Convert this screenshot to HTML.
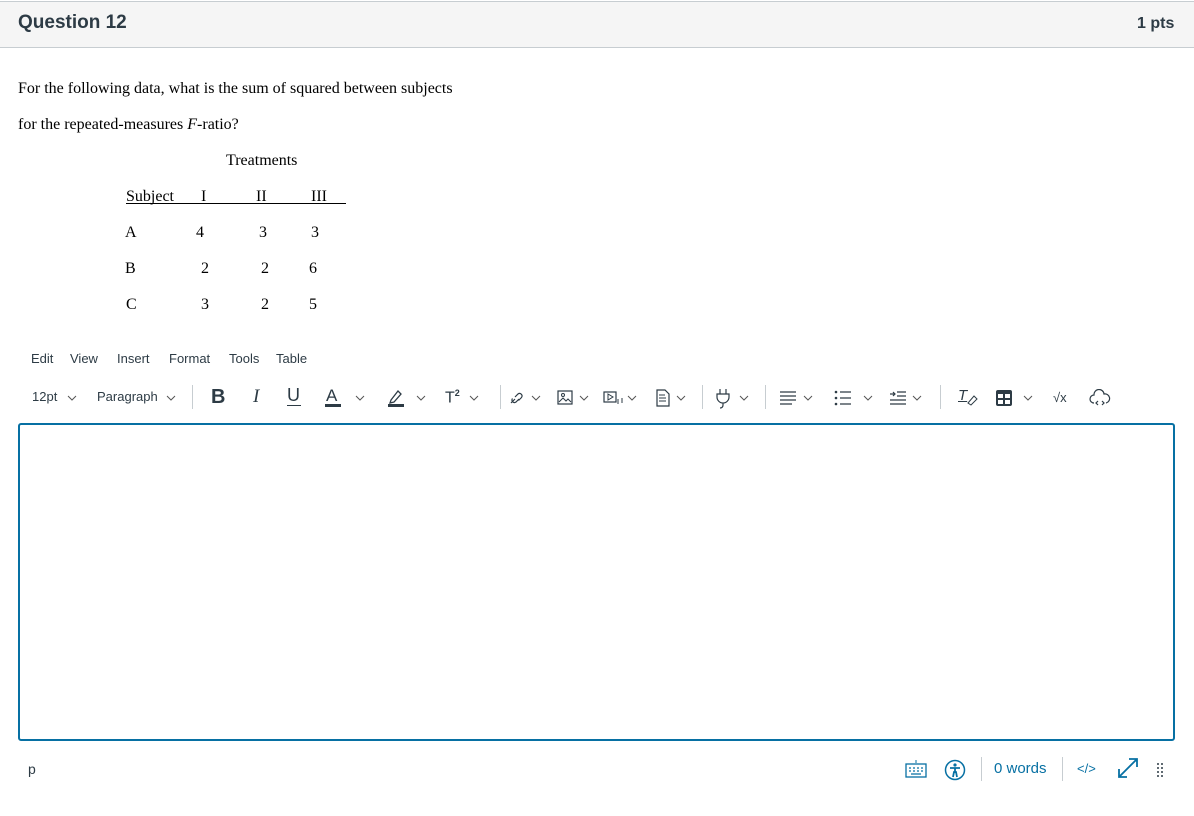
<!DOCTYPE html>
<html><head><meta charset="utf-8"><style>
body{margin:0;width:1194px;height:816px;background:#fff;position:relative;overflow:hidden;font-family:"Liberation Sans",sans-serif;color:#2d3b45}
.a{position:absolute;white-space:nowrap}
.hdr{position:absolute;left:0;top:1px;width:1194px;height:45px;background:#f5f5f5;border-top:1px solid #c7cdd1;border-bottom:1px solid #c7cdd1}
.s{font-family:"Liberation Serif",serif;color:#000;font-size:16px}
.m{font-size:13px;color:#2d3b45}
.sep{position:absolute;width:1px;height:24px;background:#c7cdd1;top:385px}
svg{position:absolute}
</style></head><body>
<div class="hdr"></div>
<div class="a" style="left:18px;top:12px;font-size:19px;font-weight:bold;color:#2d3b45">Question 12</div>
<div class="a" style="left:1137px;top:15px;font-size:16px;font-weight:bold;color:#2d3b45">1 pts</div>

<div class="a s" style="left:18px;top:80px">For the following data, what is the sum of squared between subjects</div>
<div class="a s" style="left:18px;top:116px">for the repeated-measures <i>F</i>-ratio?</div>
<div class="a s" style="left:226px;top:152px">Treatments</div>
<div class="a s" style="left:126px;top:188px">Subject</div>
<div style="position:absolute;left:126px;top:203px;width:220px;height:1px;background:#000"></div>
<div class="a s" style="left:201px;top:188px">I</div>
<div class="a s" style="left:256px;top:188px">II</div>
<div class="a s" style="left:311px;top:188px">III</div>
<div class="a s" style="left:125px;top:224px">A</div><div class="a s" style="left:196px;top:224px">4</div><div class="a s" style="left:259px;top:224px">3</div><div class="a s" style="left:311px;top:224px">3</div>
<div class="a s" style="left:125px;top:260px">B</div><div class="a s" style="left:201px;top:260px">2</div><div class="a s" style="left:261px;top:260px">2</div><div class="a s" style="left:309px;top:260px">6</div>
<div class="a s" style="left:126px;top:296px">C</div><div class="a s" style="left:201px;top:296px">3</div><div class="a s" style="left:261px;top:296px">2</div><div class="a s" style="left:309px;top:296px">5</div>

<div class="a m" style="left:31px;top:351px">Edit</div>
<div class="a m" style="left:70px;top:351px">View</div>
<div class="a m" style="left:117px;top:351px">Insert</div>
<div class="a m" style="left:169px;top:351px">Format</div>
<div class="a m" style="left:229px;top:351px">Tools</div>
<div class="a m" style="left:276px;top:351px">Table</div>

<svg width="0" height="0"><defs><path id="cv" d="M1 1 l4 4 4-4" fill="none" stroke="#555" stroke-width="1"/></defs></svg>

<div class="a m" style="left:32px;top:389px">12pt</div>
<svg style="left:67px;top:395px" width="10" height="7"><use href="#cv"/></svg>
<div class="a m" style="left:97px;top:389px">Paragraph</div>
<svg style="left:166px;top:395px" width="10" height="7"><use href="#cv"/></svg>
<div class="sep" style="left:192px"></div>
<div class="a" style="left:211px;top:386px;font-size:20px;font-weight:bold;color:#2d3b45">B</div>
<div class="a" style="left:253px;top:386px;font-size:19px;font-style:italic;font-family:'Liberation Serif',serif;color:#2d3b45">I</div>
<div class="a" style="left:287px;top:385px;font-size:18px;color:#2d3b45">U</div>
<div style="position:absolute;left:287px;top:405px;width:14px;height:1px;background:#2d3b45"></div>
<div class="a" style="left:326px;top:386px;font-size:17px;color:#2d3b45">A</div>
<div style="position:absolute;left:325px;top:404px;width:16px;height:3px;background:#2d3b45"></div>
<svg style="left:355px;top:395px" width="10" height="7"><use href="#cv"/></svg>
<svg style="left:387px;top:388px" width="18" height="20" viewBox="0 0 18 20"><path d="M4 12 L11 3 L14 6 L7 14 L3 15 Z" fill="none" stroke="#2d3b45" stroke-width="1.3"/><rect x="1" y="16" width="16" height="3" fill="#2d3b45"/></svg>
<svg style="left:416px;top:395px" width="10" height="7"><use href="#cv"/></svg>
<div class="a" style="left:445px;top:388px;font-size:16px;color:#2d3b45">T<sup style="font-size:9px;font-weight:bold">2</sup></div>
<svg style="left:469px;top:395px" width="10" height="7"><use href="#cv"/></svg>
<div class="sep" style="left:500px"></div>
<svg style="left:508px;top:389px" width="18" height="18"><path d="M3 14 l4-4 M7 8 l3-3 a2.5 2.5 0 0 1 3.5 3.5 l-3 3 M11 10 l-3 3 a2.5 2.5 0 0 1-3.5-3.5" fill="none" stroke="#2d3b45" stroke-width="1.2"/></svg>
<svg style="left:531px;top:395px" width="10" height="7"><use href="#cv"/></svg>
<svg style="left:556px;top:389px" width="18" height="18"><rect x="2" y="2" width="14" height="13" fill="none" stroke="#2d3b45" stroke-width="1.2"/><path d="M3 13 l4-4 3 3 2-2 3 3" fill="none" stroke="#2d3b45"/><circle cx="7" cy="6" r="1.5" fill="none" stroke="#2d3b45"/></svg>
<svg style="left:579px;top:395px" width="10" height="7"><use href="#cv"/></svg>
<svg style="left:603px;top:389px" width="22" height="18"><rect x="1" y="3" width="12" height="10" fill="none" stroke="#2d3b45" stroke-width="1.2"/><path d="M5 5 l5 3 -5 3z" fill="none" stroke="#2d3b45"/><path d="M15 10 v5 M19 9 v5" stroke="#2d3b45"/></svg>
<svg style="left:627px;top:395px" width="10" height="7"><use href="#cv"/></svg>
<svg style="left:655px;top:388px" width="16" height="20"><path d="M2 2 h8 l4 4 v12 h-12z" fill="none" stroke="#2d3b45" stroke-width="1.2"/><path d="M4 7 h6 M4 10 h7 M4 13 h7" stroke="#2d3b45"/></svg>
<svg style="left:676px;top:395px" width="10" height="7"><use href="#cv"/></svg>
<div class="sep" style="left:702px"></div>
<svg style="left:715px;top:387px" width="18" height="22"><path d="M5 2 v5 M11 2 v5 M2 7 h12 v3 a6 6 0 0 1-12 0z M8 16 v2 q0 3 -3 3" fill="none" stroke="#2d3b45" stroke-width="1.2"/></svg>
<svg style="left:739px;top:395px" width="10" height="7"><use href="#cv"/></svg>
<div class="sep" style="left:765px"></div>
<svg style="left:779px;top:390px" width="18" height="16"><path d="M1 2h16M1 6h16M1 10h16M1 14h12" stroke="#2d3b45" stroke-width="1.2"/></svg>
<svg style="left:803px;top:395px" width="10" height="7"><use href="#cv"/></svg>
<svg style="left:834px;top:390px" width="18" height="16"><circle cx="2" cy="2" r="1.3" fill="#2d3b45"/><circle cx="2" cy="8" r="1.3" fill="#2d3b45"/><circle cx="2" cy="14" r="1.3" fill="#2d3b45"/><path d="M6 2h11M6 8h11M6 14h11" stroke="#2d3b45" stroke-width="1.2"/></svg>
<svg style="left:863px;top:395px" width="10" height="7"><use href="#cv"/></svg>
<svg style="left:889px;top:390px" width="18" height="16"><path d="M1 4h5 M4 2 l2 2 -2 2 M8 2h9M8 6h9M1 10h16M1 14h16" stroke="#2d3b45" stroke-width="1.2" fill="none"/></svg>
<svg style="left:912px;top:395px" width="10" height="7"><use href="#cv"/></svg>
<div class="sep" style="left:940px"></div>
<div class="a" style="left:958px;top:387px;font-size:15px;font-style:italic;color:#2d3b45;text-decoration:underline">T</div>
<svg style="left:966px;top:394px" width="12" height="12"><path d="M2 9 l6-7 3 3 -6 6z" fill="none" stroke="#2d3b45"/></svg>
<svg style="left:995px;top:389px" width="18" height="18"><rect x="1" y="1" width="16" height="16" rx="2" fill="#2d3b45"/><rect x="3" y="5" width="5" height="4" fill="#fff"/><rect x="10" y="5" width="5" height="4" fill="#fff"/><rect x="3" y="11" width="5" height="4" fill="#fff"/><rect x="10" y="11" width="5" height="4" fill="#fff"/></svg>
<svg style="left:1023px;top:395px" width="10" height="7"><use href="#cv"/></svg>
<div class="a" style="left:1053px;top:390px;font-size:13px;color:#2d3b45">&#8730;x</div>
<svg style="left:1089px;top:389px" width="22" height="18"><path d="M5 14 a4 4 0 0 1 0-8 a5 5 0 0 1 10-1 a4 4 0 0 1 2 9 M9 12 l-2 2 2 2 M13 12 l2 2 -2 2" fill="none" stroke="#2d3b45" stroke-width="1.2"/></svg>

<div style="position:absolute;left:18px;top:423px;width:1153px;height:314px;border:2px solid #0770a3;border-radius:3px"></div>

<div class="a" style="left:28px;top:761px;font-size:14px;color:#2d3b45">p</div>
<svg style="left:905px;top:759px" width="22" height="20"><path d="M11 1 v3" stroke="#0770a3"/><rect x="1" y="5" width="20" height="13" fill="none" stroke="#0770a3" stroke-width="1.3"/><path d="M4 9h2M8 9h2M12 9h2M16 9h2M4 12h2M8 12h2M12 12h2M16 12h2M6 15h10" stroke="#0770a3" stroke-width="1.3"/></svg>
<svg style="left:944px;top:759px" width="22" height="22"><circle cx="11" cy="11" r="9.5" fill="none" stroke="#0770a3" stroke-width="1.5"/><circle cx="11" cy="6" r="1.6" fill="#0770a3"/><path d="M6 9 h10 M11 9 v5 M9 18 l1-5 h2 l1 5" stroke="#0770a3" stroke-width="1.8" fill="none"/></svg>
<div style="position:absolute;left:981px;top:757px;width:1px;height:24px;background:#c7cdd1"></div>
<div class="a" style="left:994px;top:760px;font-size:15px;color:#0770a3">0 words</div>
<div style="position:absolute;left:1062px;top:757px;width:1px;height:24px;background:#c7cdd1"></div>
<div class="a" style="left:1077px;top:761px;font-size:13px;color:#0770a3">&lt;/&gt;</div>
<svg style="left:1117px;top:757px" width="22" height="22"><path d="M2 20 L20 2 M2 12 v8 h8 M12 2 h8 v8" fill="none" stroke="#0770a3" stroke-width="1.8"/></svg>
<svg style="left:1156px;top:762px" width="8" height="18"><g fill="#2d3b45"><circle cx="2" cy="2" r="1"/><circle cx="6" cy="2" r="1"/><circle cx="2" cy="6" r="1"/><circle cx="6" cy="6" r="1"/><circle cx="2" cy="10" r="1"/><circle cx="6" cy="10" r="1"/><circle cx="2" cy="14" r="1"/><circle cx="6" cy="14" r="1"/></g></svg>
</body></html>
